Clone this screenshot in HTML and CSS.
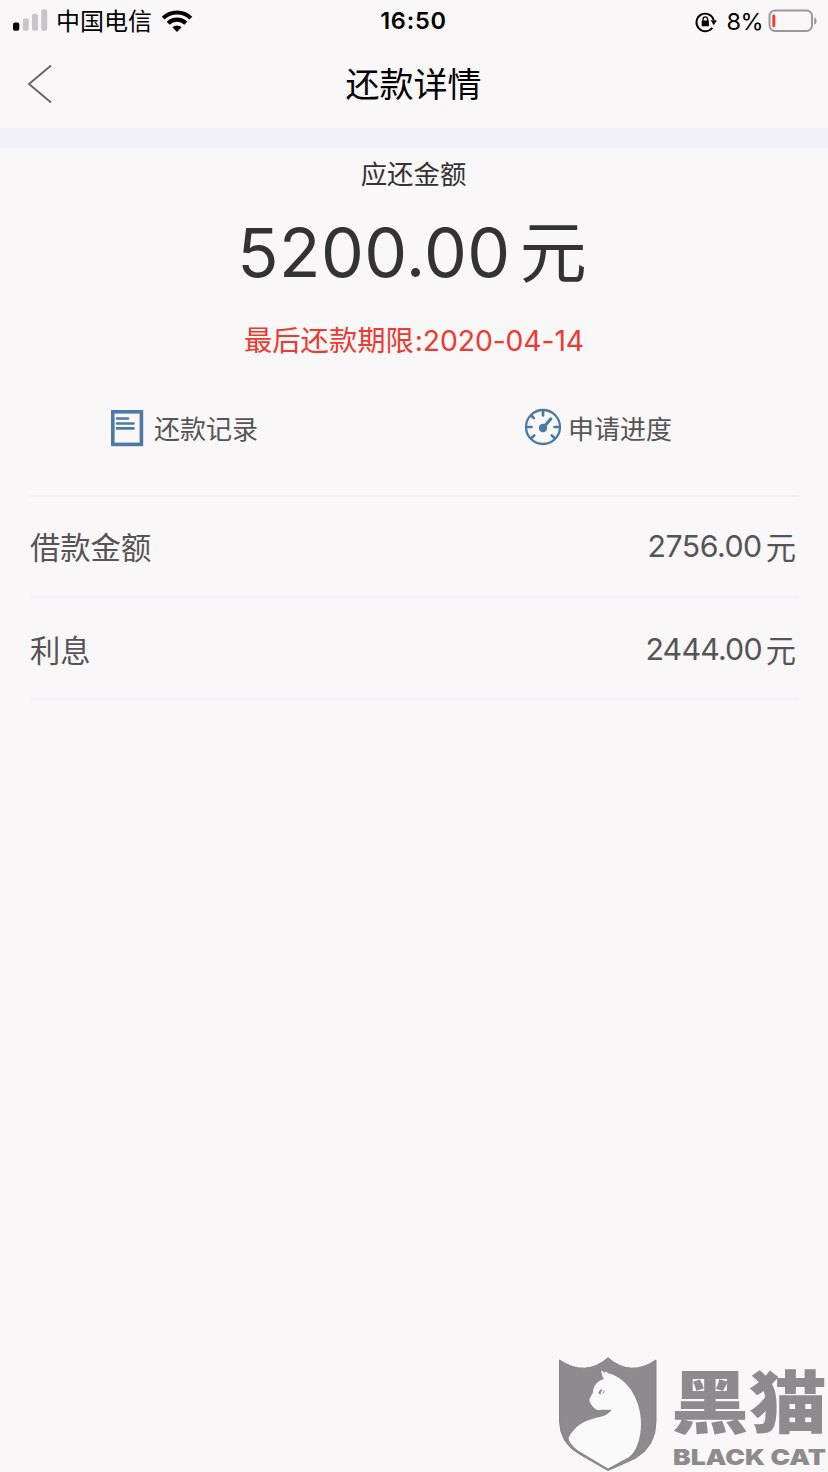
FILE: index.html
```html
<!DOCTYPE html>
<html lang="zh-CN">
<head>
<meta charset="utf-8">
<title>还款详情</title>
<link rel="stylesheet" href="styles.css">
</head>
<body>
<div class="screen">
  <header class="status">
    <div class="status-left">
      <svg class="signal" width="35" height="23" viewBox="0 0 35 23">
        <rect x="0" y="13.5" width="6.3" height="8.3" rx="2"/>
        <g fill="#c8c6c8"><rect x="9.8" y="9.5" width="6" height="12.3" rx="2"/><rect x="19" y="4.8" width="6" height="17" rx="2"/><rect x="28.2" y="0.3" width="6" height="21.5" rx="2"/></g>
      </svg>
      <span class="carrier">中国电信</span>
      <svg class="wifi" width="32" height="24" viewBox="0 0 32 24">
        <g fill="none" stroke="#000" stroke-width="4.1"><path d="M2.2 9.1a19.7 19.7 0 0 1 27.6 0"/><path d="M7.2 14.2a12.7 12.7 0 0 1 17.6 0"/></g>
        <path d="M11.4 18.3a6.7 6.7 0 0 1 9.2 0L16 22.9z"/>
      </svg>
    </div>
    <span class="clock">16:50</span>
    <div class="status-right">
      <svg class="lock" width="23" height="22" viewBox="0 0 23 22">
        <path d="M17.3 16.7A8.8 8.8 0 1 1 18.7 9" fill="none" stroke="#000" stroke-width="1.9"/>
        <path d="M15.7 9.3h6.2l-3.1 5z"/>
        <rect x="6.7" y="9.5" width="7.2" height="5.7" rx=".6"/>
        <path d="M8 10V8.2a2.3 2.3 0 0 1 4.6 0V10" fill="none" stroke="#000" stroke-width="1.3"/>
      </svg>
      <span class="percent">8%</span>
      <svg class="battery" width="50" height="24" viewBox="0 0 50 24">
        <rect x="1.5" y="1.5" width="42.5" height="20.5" rx="5.5" fill="none" stroke="#99979a" stroke-width="1.9"/>
        <rect x="4.3" y="5.6" width="3" height="12.6" rx="1.4" fill="#f43d32"/>
        <path d="M46.2 8.2c3.2 1.5 3.2 6 0 7.5z" fill="#99979a"/>
      </svg>
    </div>
  </header>
  <nav class="navbar">
    <svg class="back" width="26" height="40" viewBox="0 0 26 40"><path d="M24 1.5L2 20l22 18.5" fill="none" stroke="#666" stroke-width="1.9"/></svg>
    <h1 class="title">还款详情</h1>
  </nav>
  <div class="band"></div>
  <main>
    <section class="summary">
      <div class="label">应还金额</div>
      <div class="amount"><span class="digits">5200.00</span><span class="unit">元</span></div>
      <div class="deadline"><span>最后还款期限</span><span class="date">:2020-04-14</span></div>
    </section>
    <section class="actions">
      <div class="action">
        <svg width="34" height="38" viewBox="0 0 34 38" fill="none" stroke="#4c7aa5">
          <rect x="2.8" y="2.8" width="28.6" height="32.6" stroke-width="3.6"/>
          <path d="M7 9.5h11M7 14.5h16.5M7 19.4h16.5" stroke-width="2.7" stroke-linecap="round"/>
        </svg>
        <span>还款记录</span>
      </div>
      <div class="action">
        <svg class="gauge" width="38" height="38" viewBox="0 0 38 38" fill="none" stroke="#4c7aa5">
          <circle cx="19" cy="19" r="17" stroke-width="2.3"/>
          <path d="M19 3v4.5M3 19h4.5M30.5 19H35M7.5 7.8l2.3 2.3M7.7 29.8l2.5-2.3M30.3 29.8l-2.5-2.3" stroke-width="2.7" stroke-linecap="round"/>
          <path d="M20 18.7l6.700-7.700" stroke-width="3.200" stroke-linecap="round"/>
          <circle cx="19" cy="20" r="4.200" fill="#4c7aa5" stroke="none"/>
        </svg>
        <span>申请进度</span>
      </div>
    </section>
    <section class="rows">
      <div class="row"><span class="name">借款金额</span><span class="value"><span class="num">2756.00</span><span class="name">元</span></span></div>
      <div class="row row-last"><span class="name">利息</span><span class="value"><span class="num">2444.00</span><span class="name">元</span></span></div>
    </section>
  </main>
  <div class="brand">
    <svg class="shield" width="100" height="116" viewBox="559 1356 100 116">
      <path d="M559.500 1360q26 17.500 48.500-2.200q22.500 19.700 48 2.200v61q0 25.500-21 37.500L608 1470.500L581 1455q-21.500-11-21.500-35z" fill="#8d8b8d" stroke="#858385"/>
      <path d="M603.800 1379q-2.500-4-2.500-8.500q2 .7 3.700 2.500q.2-1.700 1.200-1.500q1 .2 1.500 1.800c21 4.500 33.300 28.500 33.300 50c0 16-5 29-12 33.700L608 1468.500L578 1450.500Q568.500 1443 568.500 1438c6-13 18-18.500 32-21.300q8-1.800 11-7h-10q-3 .5-5 0q-5.500-4-7-8.500q-.5-2.200 1.500-5.200q2.500-3 2.500-7q2-7.500 10.300-10z" fill="#fbfafb"/>
      <path d="M598.500 1393q.8-3.500 4-3.700l-1 2q-1.500 1-.5 2.700q-1.500 1-2.500-1zM603.800 1389.800q2 3-1.800 4.200q2-2 1.800-4.200z" fill="#858385"/>
    </svg>
    <div class="wordmark">
      <svg width="157" height="84" viewBox="0 0 157 84"><text class="brand-cn" transform="translate(0 67) scale(1 .88)" textLength="156" lengthAdjust="spacingAndGlyphs">黑猫</text></svg>
      <svg width="157" height="27" viewBox="0 0 157 27"><text class="brand-en" x="2" y="19.500" textLength="153" lengthAdjust="spacingAndGlyphs">BLACK CAT</text></svg>
    </div>
  </div>
</div>
</body>
</html>
```
FILE: styles.css
```css
* { box-sizing: border-box; }
body {
  margin: 0;
  background: #f9f7f8;
  color: #555;
  font-family: Inter, "Noto Sans CJK SC", sans-serif;
}
.screen {
  width: 828px;
  height: 1472px;
  display: flex;
  flex-direction: column;
  overflow: hidden;
  white-space: nowrap;
}
svg { display: block; flex: none; overflow: visible; }
.status {
  height: 42px;
  display: grid;
  grid-template-columns: 1fr auto 1fr;
  align-items: center;
  padding: 0 10px 0 13px;
  color: #000;
  line-height: 40px;
}
.status-left, .status-right { display: flex; align-items: center; height: 40px; }
.signal { margin-bottom: 1px; }
.carrier { font-size: 24px; margin: 0 9px 0 8px; padding-top: 1px; }
.wifi { margin-bottom: 1px; }
.status-right { justify-content: flex-end; }
.clock { font-size: 23.5px; font-weight: 600; letter-spacing: .8px; margin-left: -4px; }
.percent { font-size: 23.5px; letter-spacing: -.6px; margin: 0 5px 0 9px; padding-top: 1px; }
.lock { margin-top: 2px; }
.status-right { padding-right: 0; }
.navbar {
  height: 86px;
  display: grid;
  grid-template-columns: 1fr auto 1fr;
  align-items: center;
  padding: 0 27px;
}
.back { margin-bottom: 2px; }
.title { margin: 0 0 0 -1px; font-size: 34px; font-weight: 400; line-height: 86px; color: #000; }
.band { flex: none; height: 20px; background: #f0f0f6; }
.summary { text-align: center; color: #333; }
.label { font-size: 26.4px; line-height: 53px; height: 52px; margin-left: -1px; }
.amount { display: flex; justify-content: center; height: 104px; padding-right: 4px; font-size: 68px; line-height: 104px; }
.digits { letter-spacing: .4px; }
.unit { margin-left: 9px; font-size: 67px; padding-top: 1px; }
.deadline { height: 74px; font-size: 28.3px; line-height: 75px; color: #ee3a2f; }
.date { margin-left: 1px; letter-spacing: -.1px; }
.actions { display: grid; grid-template-columns: 1fr 1fr; height: 117px; padding-bottom: 17px; }
.action { display: flex; align-items: center; padding-left: 110px; font-size: 26px; }
.action span { margin: 0 0 2px 10px; }
.action + .action span { margin-left: 6px; }
.gauge { margin-bottom: 2px; }
.rows { margin: 0 30px; border-top: 2px solid #f1f1f7; }
.row {
  height: 101px;
  display: flex;
  justify-content: space-between;
  align-items: center;
  border-bottom: 2px solid #f1f1f7;
  font-size: 30.3px;
  line-height: 60px;
  padding: 0 2px 0 0;
}
.row-last { height: 102px; padding-top: 2px; }
.name { padding-top: 3px; }
.value { display: flex; gap: 4px; }
.num { letter-spacing: -.5px; padding-top: 1px; }
.row-last .num { letter-spacing: -.8px; }
.brand { display: flex; width: 269px; margin-top: auto; align-self: flex-end; }
.wordmark { margin-left: 12px; padding-top: 5px; }
.brand-cn { font: 900 78px "Noto Sans CJK SC", sans-serif; fill: #8d8b8d; }
.brand-en { font: 900 22px Inter, sans-serif; fill: #8d8b8d; }
```
